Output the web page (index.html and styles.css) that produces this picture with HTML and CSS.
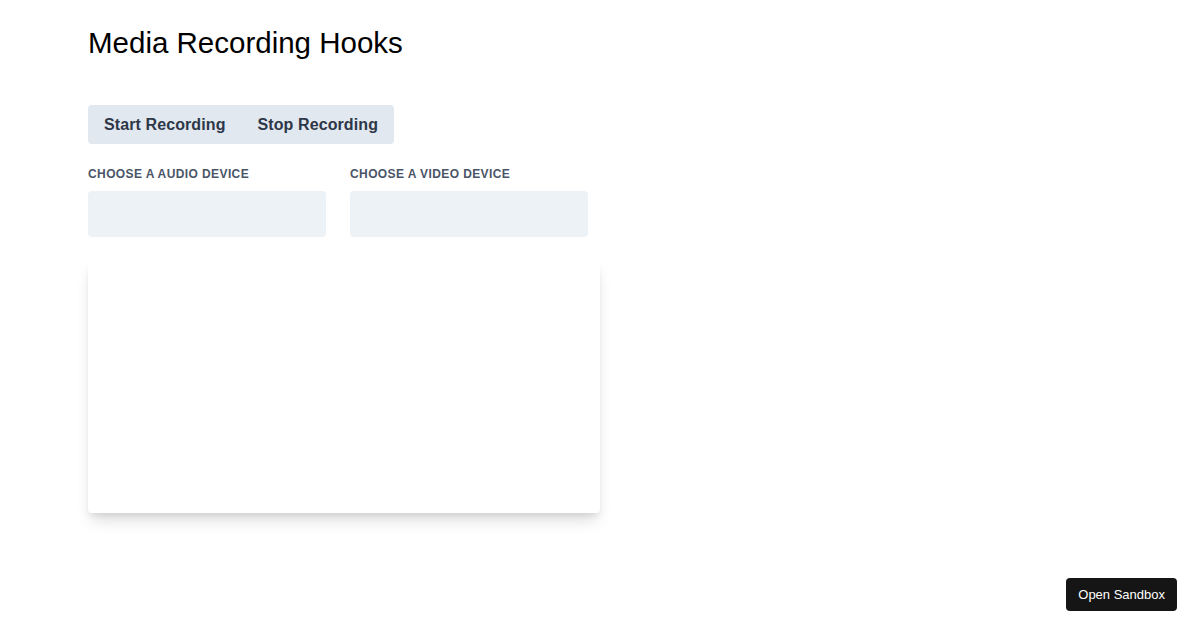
FILE: index.html
```html
<!DOCTYPE html>
<html>
<head>
<meta charset="utf-8">
<link rel="stylesheet" href="styles.css">
</head>
<body>
<main class="page">
  <h1 class="title">Media Recording Hooks</h1>
  <div class="btn-group">
    <button class="btn">Start Recording</button>
    <button class="btn">Stop Recording</button>
  </div>
  <div class="devices">
    <div class="field">
      <label class="label">Choose a audio device</label>
      <div class="select"></div>
    </div>
    <div class="field">
      <label class="label">Choose a video device</label>
      <div class="select"></div>
    </div>
  </div>
  <div class="preview"></div>
</main>
<button class="sandbox">Open Sandbox</button>
</body>
</html>
```
FILE: styles.css
```css
html, body {
  margin: 0;
  padding: 0;
  background: #ffffff;
  font-family: "Liberation Sans", Arial, sans-serif;
}
.page {
  padding: 26px 88px 40px;
}
.title {
  margin: 0;
  font-size: 29.5px;
  font-weight: 400;
  line-height: 34px;
  color: #000;
}
.btn-group {
  display: inline-flex;
  margin-top: 45px;
  background: #e2e8f0;
  border-radius: 4px;
}
.btn {
  border: 0;
  background: transparent;
  font-family: "Liberation Sans", Arial, sans-serif;
  font-size: 16px;
  font-weight: 700;
  letter-spacing: 0.1px;
  color: #2d3748;
  padding: 0 16px;
  height: 39px;
}
.devices {
  display: flex;
  gap: 24px;
  margin-top: 22px;
}
.field {
  display: flex;
  flex-direction: column;
  width: 238px;
}
.label {
  font-size: 12px;
  font-weight: 700;
  text-transform: uppercase;
  letter-spacing: 0.4px;
  color: #4a5568;
  line-height: 16px;
  margin-bottom: 9px;
}
.select {
  height: 46px;
  background: #edf2f7;
  border-radius: 4px;
}
.preview {
  margin-top: 24px;
  width: 512px;
  height: 252px;
  background: #fff;
  border-radius: 4px;
  box-shadow: 0 10px 15px -3px rgba(0,0,0,0.14), 0 4px 6px -2px rgba(0,0,0,0.08);
}
.sandbox {
  position: fixed;
  right: 23px;
  bottom: 19px;
  height: 33px;
  padding: 0 12px;
  background: #151515;
  color: #fff;
  border: 0;
  border-radius: 4px;
  font-family: "Liberation Sans", Arial, sans-serif;
  font-size: 13px;
}
```
